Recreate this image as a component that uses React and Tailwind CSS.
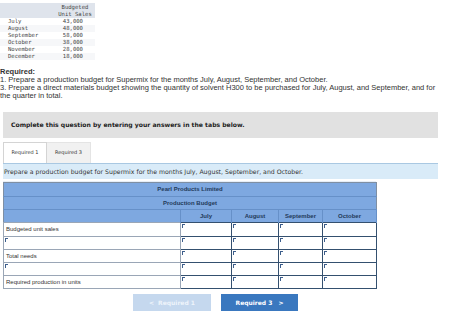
import React from 'react';

const sales = [
  ['July', '43,000'],
  ['August', '48,000'],
  ['September', '58,000'],
  ['October', '38,000'],
  ['November', '28,000'],
  ['December', '18,000'],
];

const months = ['July', 'August', 'September', 'October'];
const rows = ['Budgeted unit sales', '', 'Total needs', '', 'Required production in units'];

function Tick() {
  return (
    <>
      <span className="absolute left-[1px] top-[1px] h-[4px] w-[1px] bg-[#3d5e8c]" />
      <span className="absolute left-[1px] top-[1px] h-[1px] w-[3px] bg-[#3d5e8c]" />
    </>
  );
}

function InputCell() {
  return (
    <td className="relative border-[1.5px] border-[#34506f] bg-white p-0">
      <Tick />
    </td>
  );
}

export default function App() {
  return (
    <div className="w-[474px] h-[311px] overflow-hidden bg-white text-[#333] font-['Liberation_Sans',Arial,sans-serif]">
      {/* unit sales table */}
      <div className="pt-[3px] font-['DejaVu_Sans_Mono',monospace] text-[5.6px] leading-[7px] text-[#444]">
        <div className="flex w-[95px] bg-[#dfe4ec] py-[0.5px]">
          <div className="w-[55px]" />
          <div className="w-[40px] text-center">Budgeted<br />Unit Sales</div>
        </div>
        {sales.map(([m, v], i) => (
          <div key={m} className={`flex w-[95px] ${i % 2 ? 'bg-[#f6f7f9]' : 'bg-white'}`}>
            <div className="w-[55px] pl-[8px]">{m}</div>
            <div className="w-[28px] text-right">{v}</div>
          </div>
        ))}
      </div>

      {/* requirements */}
      <div className="mt-[8px] text-[7.5px] leading-[8px] text-[#333]">
        <div className="font-bold">Required:</div>
        <div>1. Prepare a production budget for Supermix for the months July, August, September, and October.</div>
        <div>3. Prepare a direct materials budget showing the quantity of solvent H300 to be purchased for July, August, and September, and for</div>
        <div>the quarter in total.</div>
      </div>

      <div className="ml-[3px] w-[435px]">
        <div className="mt-[12px] flex h-[26px] items-center bg-[#e1e1e1] pl-[8px] font-['DejaVu_Sans',Verdana,sans-serif] text-[6.1px] font-bold text-[#222]">
          Complete this question by entering your answers in the tabs below.
        </div>

        {/* tabs */}
        <div className="mt-[4px] flex h-[21px] font-['DejaVu_Sans',Verdana,sans-serif] text-[5px] text-[#333]">
          <div className="flex w-[44px] items-center justify-center border border-b-0 border-[#d4d4d4] bg-white">Required 1</div>
          <div className="flex w-[44px] items-center justify-center border-t border-r border-[#e4e4e4] bg-[#f1f1f1]">Required 3</div>
        </div>
        <div className="flex h-[16px] items-center border-t border-[#a9c8e2] bg-[#d9ebf8] pl-[1px] font-['DejaVu_Sans',Verdana,sans-serif] text-[6.2px] text-[#333]">
          Prepare a production budget for Supermix for the months July, August, September, and October.
        </div>
        <div className="mt-[2px] h-[1px] w-[373px] bg-[#e6eef7]" />

        {/* production budget */}
        <table className="w-[373px] table-fixed border-collapse border border-[#7f8fa3] text-[6px] text-[#333]">
          <colgroup>
            <col className="w-[177px]" />
            <col className="w-[51px]" />
            <col className="w-[47px]" />
            <col className="w-[44px]" />
            <col className="w-[54px]" />
          </colgroup>
          <thead className="font-bold text-[#233a5a]">
            <tr className="h-[14px] bg-[#7ea8e0]">
              <th colSpan={5} className="border-b border-[#6690c8] font-bold">Pearl Products Limited</th>
            </tr>
            <tr className="h-[13px] bg-[#7ea8e0]">
              <th colSpan={5} className="border-b border-[#6690c8] font-bold">Production Budget</th>
            </tr>
            <tr className="h-[13px] bg-[#7ea8e0]">
              <th className="border-r border-[#6690c8]" />
              {months.map((m) => (
                <th key={m} className="border-r border-[#6690c8] font-bold">{m}</th>
              ))}
            </tr>
          </thead>
          <tbody>
            {rows.map((r, i) => (
              <tr key={i} className={i === 0 ? 'h-[14px]' : 'h-[13px]'}>
                <td className="relative border border-[#9aa6b6] bg-white pl-[2px]">
                  {r === '' ? <Tick /> : r}
                </td>
                {months.map((m) => (
                  <InputCell key={m} />
                ))}
              </tr>
            ))}
          </tbody>
        </table>

        {/* nav buttons */}
        <div className="mt-[5px] flex gap-[10px] pl-[130px] font-['DejaVu_Sans',Verdana,sans-serif] text-[6px] font-bold text-white">
          <div className="flex h-[17px] w-[78px] items-center justify-center bg-[#c5d8ee] text-[#eef4fb]">
            <span className="mr-[4px]">&lt;</span>Required 1
          </div>
          <div className="flex h-[17px] w-[77px] items-center justify-center bg-[#3a78bf]">
            Required 3<span className="ml-[6px]">&gt;</span>
          </div>
        </div>
      </div>
    </div>
  );
}
